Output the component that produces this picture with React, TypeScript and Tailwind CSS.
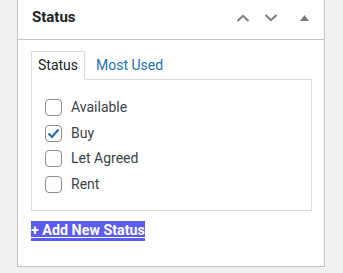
import React from "react";

const TERMS = [
  { name: "Available", checked: false },
  { name: "Buy", checked: true },
  { name: "Let Agreed", checked: false },
  { name: "Rent", checked: false },
];

function Chevron({ up }: { up?: boolean }) {
  return (
    <svg width="14" height="8" viewBox="0 0 14 8" className="text-[#787c82]">
      <path
        d={up ? "M1.5 7 L7 1.8 L12.5 7" : "M1.5 1 L7 6.2 L12.5 1"}
        fill="none"
        stroke="currentColor"
        strokeWidth="2"
      />
    </svg>
  );
}

export default function App() {
  return (
    <div className="h-[273px] w-[343px] bg-[#f0f0f1] font-['Roboto','Liberation_Sans',sans-serif]">
      <div className="ml-[17px] h-[267px] w-[308px] border-x border-b border-[#c3c4c7] bg-white">
        {/* header */}
        <div className="flex h-[40px] items-center border-b border-[#c3c4c7] pl-[14px] pr-[15px]">
          <h2 className="flex-1 pb-[4px] text-[15px] font-bold text-[#1d2327]">Status</h2>
          <div className="flex items-center gap-[14px] pb-[3px]">
            <Chevron up />
            <Chevron />
            <svg width="9" height="6" viewBox="0 0 9 6" className="ml-[8px] text-[#787c82]">
              <path d="M4.5 0 L9 6 L0 6 Z" fill="currentColor" />
            </svg>
          </div>
        </div>

        <div className="px-[13px] pt-[11px]">
          {/* tabs */}
          <div className="flex items-end text-[14px]">
            <div className="relative z-10 -mb-px flex h-[29px] items-center border border-b-white border-[#dcdcde] bg-white px-[6px] pb-[1px] text-[#1d2327]">
              Status
            </div>
            <div className="flex h-[28px] items-center pl-[11px] text-[#2271b1]">Most Used</div>
          </div>

          {/* panel */}
          <div className="w-[281px] border border-[#dcdcde] bg-white pt-[15px] pb-[13px] pl-[13px]">
            {TERMS.map((t) => (
              <label key={t.name} className="flex h-[25.5px] items-center gap-[9px] text-[14px] text-[#3c434a]">
                <span className="flex h-[17px] w-[17px] items-center justify-center rounded-[4px] border border-[#8c8f94] bg-white">
                  {t.checked && (
                    <svg width="13" height="11" viewBox="0 0 13 11">
                      <path d="M1.5 5.5 L5 9 L11.5 1.5" fill="none" stroke="#2271b1" strokeWidth="2.2" />
                    </svg>
                  )}
                </span>
                {t.name}
              </label>
            ))}
          </div>

          <div className="mt-[10px] flex">
            <span className="flex h-[20px] items-center bg-[#5c5cf0] text-[14.3px] font-bold text-white underline underline-offset-2">
              + Add New Status
            </span>
          </div>
        </div>
      </div>
    </div>
  );
}
